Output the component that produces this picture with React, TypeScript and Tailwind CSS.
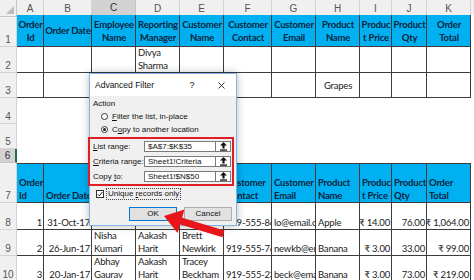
import React from "react";
import { cva } from "class-variance-authority";

// column widths: row header, A..K, then a sliver of L
const COLS =
  "grid grid-cols-[17px_27px_48px_44px_44px_44px_48px_44px_44px_32px_35px_44px_1fr]";

const LETTERS = ["A", "B", "C", "D", "E", "F", "G", "H", "I", "J", "K"];

const HEAD = [
  ["Order", "Id"],
  ["Order Date"],
  ["Employee", "Name"],
  ["Reporting", "Manager"],
  ["Customer", "Name"],
  ["Customer", "Contact"],
  ["Customer", "Email"],
  ["Product", "Name"],
  ["Produc", "t Price"],
  ["Product", "Qty"],
  ["Order", "Total"],
];

type Align = "l" | "c" | "r";
type CellData = { lines?: string[]; a?: Align };

const cell = cva(
  "flex min-w-0 flex-col overflow-hidden pl-[2px] pr-[1px] text-[9.5px] leading-[13px] tracking-[-0.2px] font-['Lato',sans-serif]",
  {
    variants: {
      kind: {
        head: "bg-[#00b0f0] font-bold text-[#0d2440] border-r border-b border-[#3c3c3c]",
        body: "bg-white text-[#1a1a1a] border-r border-b border-[#3c3c3c]",
        plain: "bg-white",
      },
      a: { l: "items-start", c: "items-center text-center", r: "items-end" },
      v: { b: "justify-end", c: "justify-center" },
      top: { true: "border-t", false: "" },
    },
    defaultVariants: { kind: "body", a: "l", v: "b", top: false },
  }
);

function RowHead({ n, sel }: { n: number; sel?: boolean }) {
  return (
    <div
      className={
        sel
          ? "flex items-end justify-center border-b border-r-2 border-b-[#c6c6c6] border-r-[#217346] bg-[#d2d2d2] pb-[1px] text-[10px] leading-[11px] text-[#333] font-['Liberation_Sans',sans-serif]"
          : "flex items-end justify-center border-b border-r border-[#d4d4d4] bg-[#f0f0f0] pb-[1px] text-[10px] leading-[11px] text-[#555] font-['Liberation_Sans',sans-serif]"
      }
    >
      {n}
    </div>
  );
}

function Row({
  n,
  h,
  cells,
  kind = "body",
  a,
  v,
  top,
  sel,
}: {
  n: number;
  h: string;
  cells: CellData[];
  kind?: "head" | "body" | "plain";
  a?: Align;
  v?: "b" | "c";
  top?: boolean;
  sel?: boolean;
}) {
  return (
    <div className={`${COLS} ${h}`}>
      <RowHead n={n} sel={sel} />
      {LETTERS.map((_, i) => {
        const c = cells[i] ?? {};
        return (
          <div key={i} className={cell({ kind, a: c.a ?? a, v, top })}>
            {(c.lines ?? []).map((l, j) => (
              <div key={j} className="whitespace-nowrap">
                {l}
              </div>
            ))}
          </div>
        );
      })}
      <div className="bg-white" />
    </div>
  );
}

function ColumnHeader() {
  return (
    <div className={`${COLS} h-[15px]`}>
      <div className="relative border-r border-b border-[#c6c6c6] bg-[#f0f0f0]">
        <div className="absolute right-[2px] bottom-[2px] h-0 w-0 border-l-[8px] border-t-[8px] border-l-transparent border-t-transparent border-b-0 border-r-[8px] border-r-[#bdbdbd]" />
      </div>
      {LETTERS.map(l => (
        <div
          key={l}
          className={
            l === "C"
              ? "flex items-center justify-center border-r border-b-2 border-r-[#c6c6c6] border-b-[#217346] bg-[#d2d2d2] text-[10px] text-[#333] font-['Liberation_Sans',sans-serif]"
              : "flex items-center justify-center border-r border-b border-[#d4d4d4] bg-[#f0f0f0] text-[10px] text-[#555] font-['Liberation_Sans',sans-serif]"
          }
        >
          {l}
        </div>
      ))}
      <div className="border-b border-[#d4d4d4] bg-[#f0f0f0]" />
    </div>
  );
}

const empty: CellData[] = [];

function CollapseIcon() {
  return (
    <svg width="7" height="9" viewBox="0 0 7 9" className="block">
      <path d="M3.5 0 L7 3.6 H4.6 V6.4 H2.4 V3.6 H0 Z" fill="#111" />
      <rect x="0" y="7.4" width="7" height="1.3" fill="#111" />
    </svg>
  );
}

function RangeRow({ label, value }: { label: React.ReactNode; value: string }) {
  return (
    <div className="flex h-[11px] items-center">
      <div className="w-[54px] shrink-0 pl-[3px]">{label}</div>
      <div className="flex h-full w-[72px] items-center border border-[#7a7a7a] bg-white pl-[3px] leading-none">
        {value}
      </div>
      <div className="flex h-full w-[15px] items-center justify-center border border-l-0 border-[#7a7a7a] bg-white">
        <CollapseIcon />
      </div>
    </div>
  );
}

function Radio({ on, children }: { on?: boolean; children: React.ReactNode }) {
  return (
    <div className="flex h-[13px] items-center gap-[4px] pl-[11px]">
      <div className="flex h-[7px] w-[7px] items-center justify-center rounded-full border border-[#333] bg-white">
        {on && <div className="h-[3px] w-[3px] rounded-full bg-[#222]" />}
      </div>
      <span>{children}</span>
    </div>
  );
}

function AdvancedFilter() {
  return (
    <div className="absolute left-[89px] top-[73px] flex h-[153px] w-[148px] flex-col border border-[#7eb4ea] bg-[#f0f0f0] text-[8px] leading-[10px] text-[#111] shadow-[0_0_8px_rgba(0,0,0,0.28)] font-['Liberation_Sans',sans-serif]">
      <div className="flex h-[22px] items-center bg-white pl-[5px]">
        <span className="text-[8.5px]">Advanced Filter</span>
        <span className="ml-auto mr-[23px] w-[6px] text-center text-[9px]">?</span>
        <svg width="7" height="7" viewBox="0 0 7 7" className="mr-[11px]">
          <path d="M0.5 0.5 L6.5 6.5 M6.5 0.5 L0.5 6.5" stroke="#222" strokeWidth="0.9" />
        </svg>
      </div>
      <div className="pl-[3px] pt-[3px]">Action</div>
      <div className="mt-[1px]">
        <Radio>
          <u>F</u>ilter the list, in-place
        </Radio>
        <Radio on>
          C<u>o</u>py to another location
        </Radio>
      </div>
      <div className="ml-[-2px] mr-[2px] mt-[1px] flex flex-col gap-[4px] border-2 border-[#e01e26] py-[2px]">
        <RangeRow
          label={
            <>
              <u>L</u>ist range:
            </>
          }
          value="$A$7:$K$35"
        />
        <RangeRow
          label={
            <>
              <u>C</u>riteria range:
            </>
          }
          value="Sheet1!Criteria"
        />
        <RangeRow
          label={
            <>
              Copy <u>t</u>o:
            </>
          }
          value="Sheet1!$N$50"
        />
      </div>
      <div className="mt-[2px] flex h-[12px] items-center gap-[2px] pl-[6px]">
        <div className="flex h-[8px] w-[8px] items-center justify-center border border-[#333] bg-white">
          <svg width="6" height="6" viewBox="0 0 6 6">
            <path d="M0.6 3.2 L2.3 4.9 L5.4 1" fill="none" stroke="#111" strokeWidth="0.9" />
          </svg>
        </div>
        <span className="border border-dotted border-[#444] px-[1px]">
          Unique <u>r</u>ecords only
        </span>
      </div>
      <div className="mt-[7px] flex justify-end gap-[7px] pr-[4px]">
        <div className="flex h-[14px] w-[48px] items-center justify-center border border-[#0078d7] bg-[#e1e1e1]">
          OK
        </div>
        <div className="flex h-[14px] w-[48px] items-center justify-center border border-[#adadad] bg-[#e1e1e1]">
          Cancel
        </div>
      </div>
    </div>
  );
}

function RedArrow() {
  return (
    <svg
      width="474"
      height="280"
      viewBox="0 0 474 280"
      className="pointer-events-none absolute left-0 top-0"
    >
      <polygon
        points="164,216 184.4,209.5 182.2,217.8 224.4,230.4 222.4,237.2 180.2,224.6 177.5,233"
        fill="#e8161b"
      />
    </svg>
  );
}

export default function App() {
  return (
    <div className="relative h-[280px] w-[474px] overflow-hidden bg-white">
      <ColumnHeader />
      <Row
        n={1}
        h="h-[32px]"
        kind="head"
        a="c"
        v="c"
        cells={HEAD.map(lines => ({ lines }))}
      />
      <Row
        n={2}
        h="h-[26px]"
        cells={[{}, {}, {}, { lines: ["Divya", "Sharma"] }]}
      />
      <Row
        n={3}
        h="h-[25px]"
        v="c"
        cells={[{}, {}, {}, {}, {}, {}, {}, { lines: ["Grapes"], a: "c" }]}
      />
      <Row n={4} h="h-[26px]" kind="plain" cells={empty} />
      <Row n={5} h="h-[25px]" kind="plain" cells={empty} />
      <Row n={6} h="h-[14px]" kind="plain" cells={empty} sel />
      <Row
        n={7}
        h="h-[40px]"
        kind="head"
        top
        cells={HEAD.map(lines => ({ lines }))}
      />
      <Row
        n={8}
        h="h-[27px]"
        cells={[
          { lines: ["1"], a: "r" },
          { lines: ["31-Oct-17"], a: "r" },
          {},
          {},
          {},
          { lines: ["919-555-8654"] },
          { lines: ["lo@email.com"] },
          { lines: ["Apple"] },
          { lines: ["₹ 14.00"], a: "r" },
          { lines: ["76.00"], a: "r" },
          { lines: ["₹ 1,064.00"], a: "r" },
        ]}
      />
      <Row
        n={9}
        h="h-[26px]"
        cells={[
          { lines: ["2"], a: "r" },
          { lines: ["26-Jun-17"], a: "r" },
          { lines: ["Nisha", "Kumari"] },
          { lines: ["Aakash", "Harit"] },
          { lines: ["Brett", "Newkirk"] },
          { lines: ["919-555-7654"] },
          { lines: ["newkb@email.com"] },
          { lines: ["Banana"] },
          { lines: ["₹ 3.00"], a: "r" },
          { lines: ["33.00"], a: "r" },
          { lines: ["₹ 99.00"], a: "r" },
        ]}
      />
      <Row
        n={10}
        h="h-[26px]"
        cells={[
          { lines: ["3"], a: "r" },
          { lines: ["20-Jan-17"], a: "r" },
          { lines: ["Abhay", "Gaurav"] },
          { lines: ["Aakash", "Harit"] },
          { lines: ["Tracey", "Beckham"] },
          { lines: ["919-555-2318"] },
          { lines: ["beck@email.com"] },
          { lines: ["Banana"] },
          { lines: ["₹ 3.00"], a: "r" },
          { lines: ["73.00"], a: "r" },
          { lines: ["₹ 219.00"], a: "r" },
        ]}
      />
      <AdvancedFilter />
      <RedArrow />
    </div>
  );
}
